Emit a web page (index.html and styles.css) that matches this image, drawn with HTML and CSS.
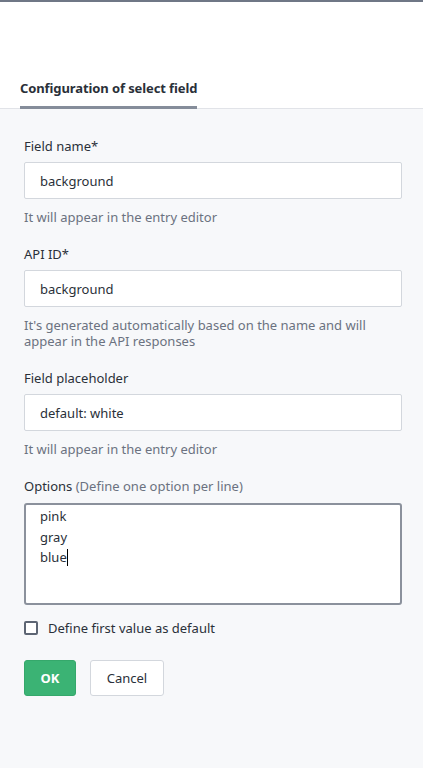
FILE: index.html
```html
<!DOCTYPE html>
<html>
<head>
<meta charset="utf-8">
<link rel="stylesheet" href="styles.css">
</head>
<body>
<div class="page">
  <header class="header">
    <div class="tabs">
      <div class="tab">Configuration of select field</div>
    </div>
  </header>
  <main class="form">
    <div class="field">
      <label class="label">Field name*</label>
      <div class="input">background</div>
      <p class="help">It will appear in the entry editor</p>
    </div>
    <div class="field">
      <label class="label">API ID*</label>
      <div class="input">background</div>
      <p class="help">It's generated automatically based on the name and will appear in the API responses</p>
    </div>
    <div class="field">
      <label class="label">Field placeholder</label>
      <div class="input">default: white</div>
      <p class="help">It will appear in the entry editor</p>
    </div>
    <div class="field">
      <label class="label label-options">Options <span class="hint">(Define one option per line)</span></label>
      <div class="textarea">
        <div>pink</div>
        <div>gray</div>
        <div>blue<span class="caret"></span></div>
      </div>
    </div>
    <div class="check">
      <span class="box"></span>
      <span>Define first value as default</span>
    </div>
    <div class="actions">
      <button class="btn btn-ok">OK</button>
      <button class="btn btn-cancel">Cancel</button>
    </div>
  </main>
</div>
</body>
</html>
```
FILE: styles.css
```css
* { box-sizing: border-box; }
html, body { margin: 0; padding: 0; }
body {
  font-family: "Noto Sans", "Open Sans", sans-serif;
  font-size: 13px;
  color: #2a3039;
  background: #f7f8fa;
}
.page {
  border-top: 2px solid #6f7786;
  min-height: 768px;
  background: #f7f8fa;
}
.header {
  background: #fff;
  height: 107px;
  border-bottom: 1px solid #e1e3e8;
  display: flex;
  align-items: flex-end;
  padding-left: 20px;
}
.tab {
  font-size: 13px;
  font-weight: 700;
  color: #2a3039;
  padding-bottom: 9px;
  border-bottom: 3px solid #858d9a;
  margin-bottom: -1px;
  line-height: 18px;
  letter-spacing: -0.1px;
}
.form {
  padding: 28px 21px 0 24px;
  display: flex;
  flex-direction: column;
}
.field { display: flex; flex-direction: column; }
.label {
  line-height: 18px;
  margin-bottom: 7px;
}
.label-options { margin-bottom: 8px; }
.hint { color: #6b7280; }
.input {
  height: 37px;
  background: #fff;
  border: 1px solid #d3d7dd;
  border-radius: 2px;
  padding: 0 15px;
  display: flex;
  align-items: center;
  line-height: 18px;
}
.help {
  margin: 10px 0 20px;
  color: #6b7280;
  line-height: 16px;
}
.textarea {
  height: 102px;
  background: #fff;
  border: 2px solid #8b919c;
  border-radius: 3px;
  padding: 1px 14px;
  line-height: 20.5px;
}
.caret {
  display: inline-block;
  width: 1px;
  height: 17px;
  background: #000;
  vertical-align: -4px;
}
.check {
  margin-top: 14px;
  display: flex;
  align-items: center;
  gap: 10px;
  line-height: 18px;
}
.box {
  width: 14px;
  height: 14px;
  border: 2px solid #5d6573;
  border-radius: 2px;
  background: #fff;
}
.actions {
  margin-top: 23px;
  display: flex;
  gap: 14px;
}
.btn {
  font-family: inherit;
  font-size: 13px;
  height: 36px;
  border-radius: 3px;
  cursor: pointer;
}
.btn-ok {
  width: 52px;
  background: #3bb374;
  border: 1px solid #35a86b;
  color: #fff;
  font-weight: 700;
}
.btn-cancel {
  width: 74px;
  background: #fff;
  border: 1px solid #d3d7dd;
  color: #2a3039;
}
```
